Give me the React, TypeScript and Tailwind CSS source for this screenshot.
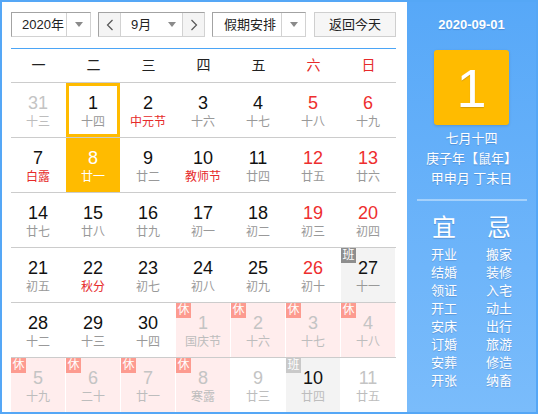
import React from 'react';

type Day = {
  n: number;
  lunar: string;
  other?: boolean;
  weekend?: boolean;
  fest?: boolean;
  rest?: boolean;
  work?: boolean;
  selected?: boolean;
  today?: boolean;
};

const weeks: Day[][] = [
  [
    { n: 31, lunar: '十三', other: true },
    { n: 1, lunar: '十四', selected: true },
    { n: 2, lunar: '中元节', fest: true },
    { n: 3, lunar: '十六' },
    { n: 4, lunar: '十七' },
    { n: 5, lunar: '十八', weekend: true },
    { n: 6, lunar: '十九', weekend: true },
  ],
  [
    { n: 7, lunar: '白露', fest: true },
    { n: 8, lunar: '廿一', today: true },
    { n: 9, lunar: '廿二' },
    { n: 10, lunar: '教师节', fest: true },
    { n: 11, lunar: '廿四' },
    { n: 12, lunar: '廿五', weekend: true },
    { n: 13, lunar: '廿六', weekend: true },
  ],
  [
    { n: 14, lunar: '廿七' },
    { n: 15, lunar: '廿八' },
    { n: 16, lunar: '廿九' },
    { n: 17, lunar: '初一' },
    { n: 18, lunar: '初二' },
    { n: 19, lunar: '初三', weekend: true },
    { n: 20, lunar: '初四', weekend: true },
  ],
  [
    { n: 21, lunar: '初五' },
    { n: 22, lunar: '秋分', fest: true },
    { n: 23, lunar: '初七' },
    { n: 24, lunar: '初八' },
    { n: 25, lunar: '初九' },
    { n: 26, lunar: '初十', weekend: true },
    { n: 27, lunar: '十一', work: true },
  ],
  [
    { n: 28, lunar: '十二' },
    { n: 29, lunar: '十三' },
    { n: 30, lunar: '十四' },
    { n: 1, lunar: '国庆节', other: true, rest: true },
    { n: 2, lunar: '十六', other: true, rest: true },
    { n: 3, lunar: '十七', other: true, rest: true },
    { n: 4, lunar: '十八', other: true, rest: true },
  ],
  [
    { n: 5, lunar: '十九', other: true, rest: true },
    { n: 6, lunar: '二十', other: true, rest: true },
    { n: 7, lunar: '廿一', other: true, rest: true },
    { n: 8, lunar: '寒露', other: true, rest: true },
    { n: 9, lunar: '廿三', other: true },
    { n: 10, lunar: '廿四', other: true, work: true },
    { n: 11, lunar: '廿五', other: true },
  ],
];

const yi = ['开业', '结婚', '领证', '开工', '安床', '订婚', '安葬', '开张'];
const ji = ['搬家', '装修', '入宅', '动土', '出行', '旅游', '修造', '纳畜'];

function Caret() {
  return (
    <span className="w-0 h-0 border-l-[4px] border-r-[4px] border-t-[5px] border-l-transparent border-r-transparent border-t-[#8a8a8a]" />
  );
}

function Chevron({ dir }: { dir: 'l' | 'r' }) {
  return (
    <svg width="8" height="12" viewBox="0 0 8 12">
      <polyline
        points={dir === 'l' ? '6.5,1 1.5,6 6.5,11' : '1.5,1 6.5,6 1.5,11'}
        fill="none"
        stroke="#555"
        strokeWidth="1.2"
      />
    </svg>
  );
}

const box =
  'h-[25px] flex items-stretch border border-t-[#a3a3a3] border-l-[#a3a3a3] border-r-[#d2d2d2] border-b-[#d2d2d2] bg-white text-[13px] text-[#222]';

function Cell({ d }: { d: Day }) {
  let bg = 'bg-transparent';
  if (d.rest) bg = 'bg-[#ffeded]';
  if (d.work) bg = 'bg-[#f3f3f3]';
  if (d.today) bg = 'bg-[#ffbb00]';

  let numColor = 'text-[#111]';
  if (d.weekend) numColor = 'text-[#ee2e2e]';
  if (d.other) numColor = 'text-[#c4c4c4]';
  if (d.work) numColor = 'text-[#111]';
  if (d.today) numColor = 'text-white';

  let lunarColor = 'text-[#999]';
  if (d.fest) lunarColor = 'text-[#e62a2a]';
  if (d.other) lunarColor = 'text-[#bdbdbd]';
  if (d.today) lunarColor = 'text-white';

  return (
    <div
      className={`relative w-[55px] h-full border-r border-white flex flex-col items-center pt-[9px] ${bg} ${
        d.selected ? 'shadow-[inset_0_0_0_3px_#ffbb00]' : ''
      }`}
    >
      {d.rest && (
        <span className="absolute left-0 top-0 w-[15px] h-[15px] bg-[#fd9b90] text-white text-[12px] leading-[15px] text-center">
          休
        </span>
      )}
      {d.work && (
        <span
          className={`absolute left-0 top-0 w-[15px] h-[15px] text-white text-[12px] leading-[15px] text-center ${
            d.other ? 'bg-[#c9c9c9]' : 'bg-[#8e8e8e]'
          }`}
        >
          班
        </span>
      )}
      <span className={`text-[18px] leading-[22px] ${numColor}`}>{d.n}</span>
      <span className={`text-[12px] leading-[16px] ${lunarColor}`}>{d.lunar}</span>
    </div>
  );
}

export default function App() {
  return (
    <div
      className="w-[538px] h-[414px] border-2 border-[#55a7f6] flex overflow-hidden"
      style={{ fontFamily: '"Liberation Sans", "Noto Sans CJK SC", sans-serif' }}
    >
      {/* Calendar */}
      <div className="w-[405px] shrink-0 bg-white pl-[9px] pt-[10px]">
        <div className="flex w-[385px]">
          <div className={`${box} w-[80px]`}>
            <span className="flex-1 flex items-center pl-[10px]">2020年</span>
            <span className="w-[24px] border-l border-[#d2d2d2] flex items-center justify-center">
              <Caret />
            </span>
          </div>
          <div className={`${box} w-[107px] ml-[7px]`}>
            <span className="w-[22px] bg-[#f4f4f4] border-r border-[#d2d2d2] flex items-center justify-center">
              <Chevron dir="l" />
            </span>
            <span className="flex-1 flex items-center pl-[10px]">9月</span>
            <span className="w-[14px] flex items-center">
              <Caret />
            </span>
            <span className="w-[22px] bg-[#f4f4f4] border-l border-[#d2d2d2] flex items-center justify-center">
              <Chevron dir="r" />
            </span>
          </div>
          <div className={`${box} w-[94px] ml-[7px]`}>
            <span className="flex-1 flex items-center pl-[11px]">假期安排</span>
            <span className="w-[24px] border-l border-[#d2d2d2] flex items-center justify-center">
              <Caret />
            </span>
          </div>
          <button className="h-[25px] w-[82px] ml-[8px] border border-[#cfcfcf] bg-[#f6f6f6] text-[13px] text-[#222]">
            返回今天
          </button>
        </div>

        <div className="mt-[11px] w-[385px] h-px bg-[#4ba5f6]" />

        <div className="w-[385px] h-[34px] grid grid-cols-7 border-b border-[#cccccc] text-[14px]">
          {['一', '二', '三', '四', '五', '六', '日'].map((w, i) => (
            <div
              key={w}
              className={`flex items-center justify-center ${i >= 5 ? 'text-[#e62a2a]' : 'text-[#222]'}`}
            >
              {w}
            </div>
          ))}
        </div>

        {weeks.map((row, ri) => (
          <div key={ri} className="w-[385px] h-[55px] flex border-b border-[#cccccc]">
            {row.map((d, ci) => (
              <Cell key={ci} d={d} />
            ))}
          </div>
        ))}
      </div>

      {/* Day detail */}
      <div className="flex-1 bg-gradient-to-b from-[#57a8f8] to-[#7abcfb] text-white flex flex-col items-center pt-[14px] [text-shadow:0_1px_1px_rgba(0,0,60,0.18)]">
        <div className="text-[13px] leading-[18px] font-bold">2020-09-01</div>
        <div className="mt-[16px] w-[75px] h-[75px] rounded-[3px] bg-[#ffbb00] shadow-[0_1px_3px_rgba(0,0,0,0.15)] flex items-center justify-center text-[54px] leading-none">
          1
        </div>
        <div className="mt-[4px] text-[13px] leading-[20px] text-center">
          <div>七月十四</div>
          <div>庚子年【鼠年】</div>
          <div>甲申月 丁未日</div>
        </div>
        <div className="mt-[10px] w-[110px] h-[2px] bg-white/40" />
        <div className="mt-[12px] w-[110px] grid grid-cols-2 text-center">
          <div className="text-[24px] leading-[30px]">宜</div>
          <div className="text-[24px] leading-[30px]">忌</div>
          <div className="mt-[3px] text-[13px] leading-[18px]">
            {yi.map((t) => (
              <div key={t}>{t}</div>
            ))}
          </div>
          <div className="mt-[3px] text-[13px] leading-[18px]">
            {ji.map((t) => (
              <div key={t}>{t}</div>
            ))}
          </div>
        </div>
      </div>
    </div>
  );
}
